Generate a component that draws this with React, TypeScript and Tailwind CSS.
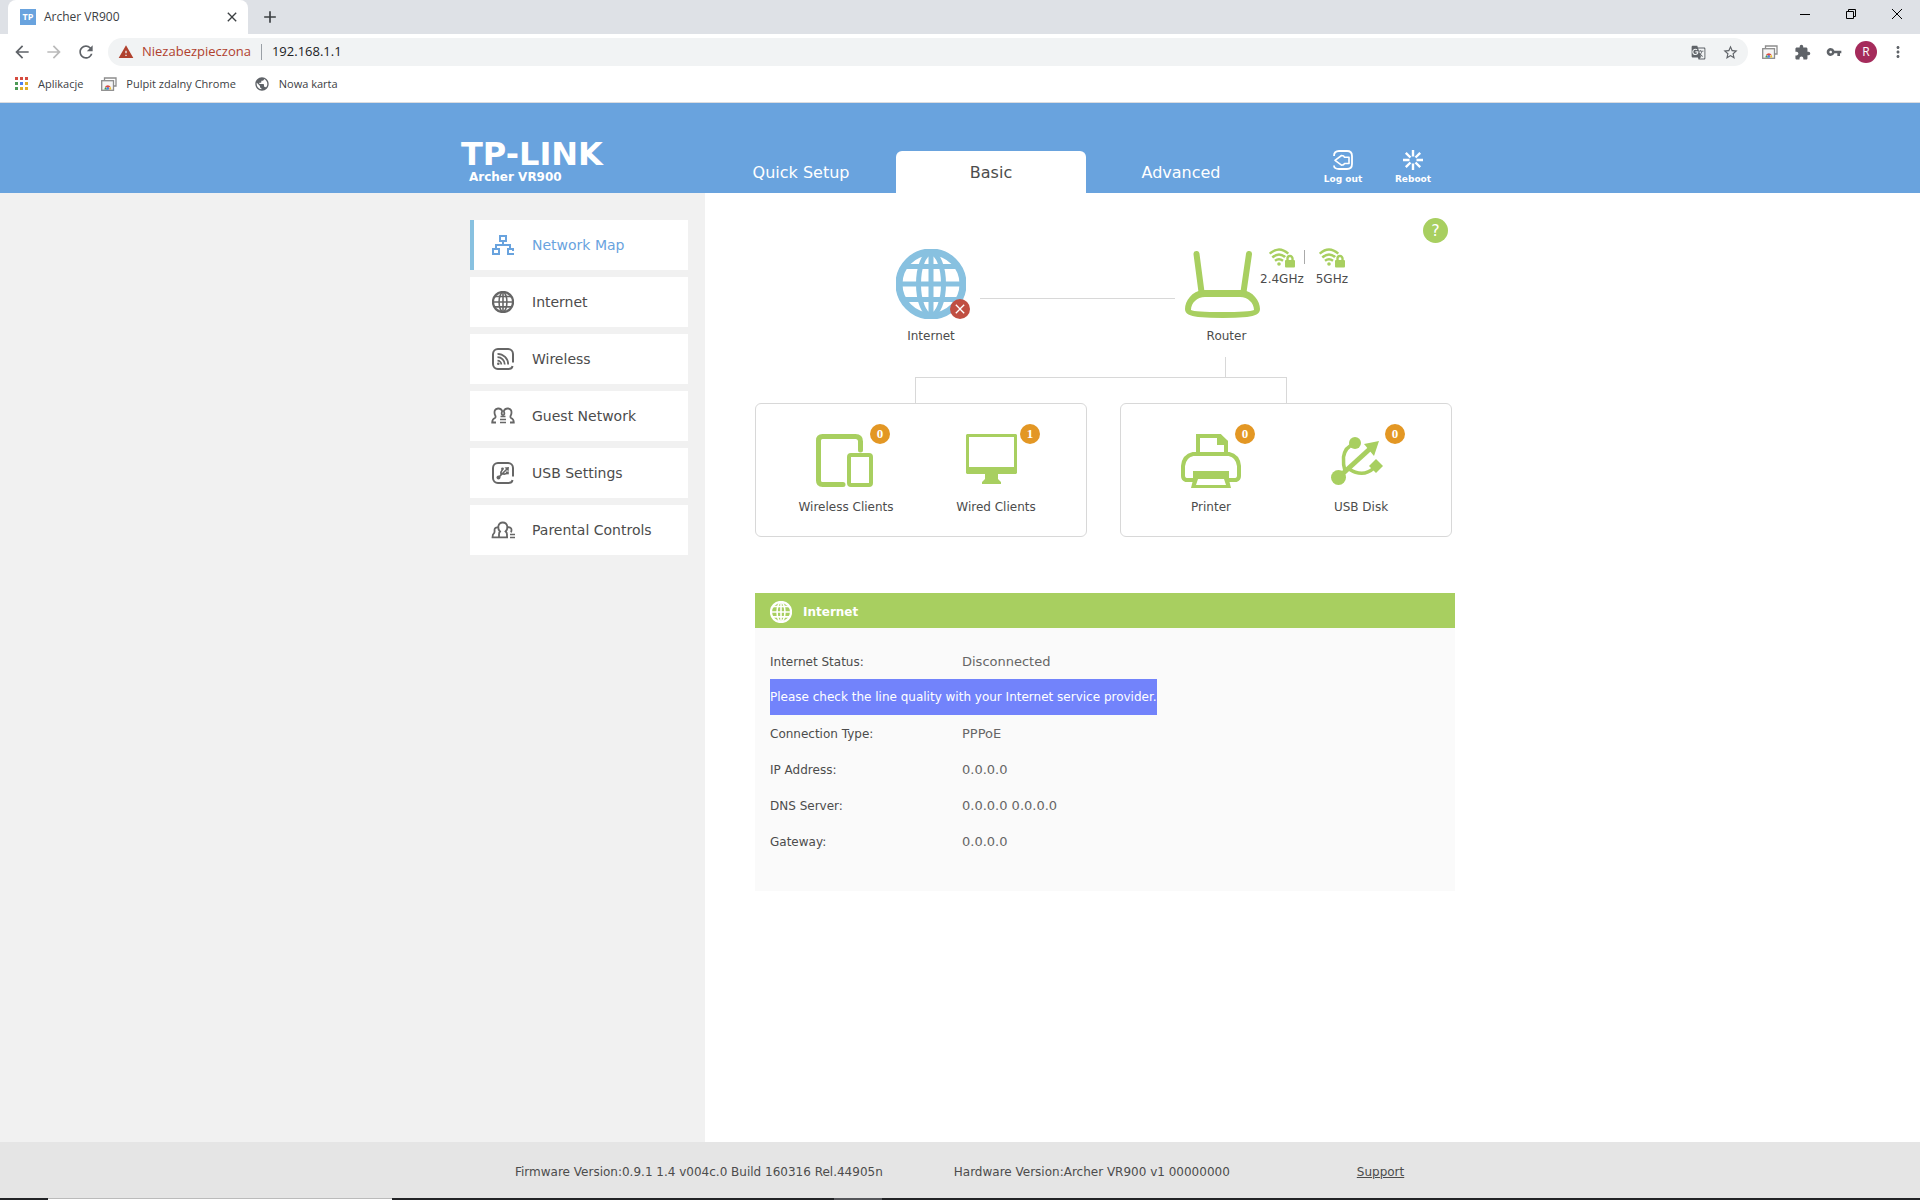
import type { ReactNode } from "react";
import {
  MdAdd,
  MdArrowBack,
  MdArrowForward,
  MdClose,
  MdExtension,
  MdGTranslate,
  MdMoreVert,
  MdPublic,
  MdRefresh,
  MdStarBorder,
  MdVpnKey,
  MdWarning,
} from "react-icons/md";

const uiFont = "font-['Open_Sans','Noto_Sans',sans-serif]";
const pageFont = "font-[Verdana,'DejaVu_Sans',sans-serif]";

const appDots = ["#d64c3f", "#d64c3f", "#d64c3f", "#4d9a56", "#4d7ff0", "#e0ae28", "#4d9a56", "#e0ae28", "#e0ae28"];

function AppsIcon() {
  return (
    <svg width="14" height="14" viewBox="0 0 14 14" aria-hidden="true">
      {appDots.map((color, i) => (
        <rect key={i} x={(i % 3) * 5} y={Math.floor(i / 3) * 5} width="3" height="3" fill={color} />
      ))}
    </svg>
  );
}

function RemoteDesktopIcon() {
  return (
    <svg width="16" height="14" viewBox="0 0 16 14" fill="none" aria-hidden="true">
      <path d="M3.500 3V1h11.500v8h-2" stroke="#8d8d8d" strokeWidth="1.300" />
      <rect x=".7" y="3.700" width="11.800" height="9.600" fill="#f5f5f5" stroke="#8d8d8d" strokeWidth="1.300" />
      <path d="M3.500 12.600a3.300 3.300 0 0 1 .8-2.600L6.500 12.600z" fill="#3f9b52" />
      <path d="M4 9.800a3.300 3.300 0 0 1 5.600 0l-2.800 1.200z" fill="#dd4b3e" />
      <path d="M9.500 9.800a3.300 3.300 0 0 1 .6 2.800H7.500z" fill="#efc02f" />
      <circle cx="6.800" cy="11.500" r="1.300" fill="#4a82ee" />
    </svg>
  );
}

function GlobeIcon({ size, stroke }: { size: number; stroke: number }) {
  return (
    <svg width={size} height={size} viewBox="0 0 70 70" fill="none" stroke="currentColor" strokeWidth={stroke} aria-hidden="true">
      <circle cx="35" cy="35" r="32" strokeWidth={stroke + 2} />
      <ellipse cx="35" cy="35" rx="12.500" ry="31" />
      <path d="M35 3v64M4 35h62M9 17.500h52M9 50.500h52" />
    </svg>
  );
}

function MapIcon() {
  return (
    <svg width="22" height="22" viewBox="0 0 22 22" fill="none" stroke="currentColor" strokeWidth="2" aria-hidden="true">
      <path d="M8 2h6v5H8zM1 15h6v5H1zM11 8v3M4 14v-3h14v3M22 15h-6v5h6M21 14v3" />
    </svg>
  );
}

function WirelessIcon() {
  return (
    <svg width="22" height="22" viewBox="0 0 22 22" fill="none" stroke="currentColor" strokeWidth="2" aria-hidden="true">
      <path d="M21 14.500V6a5 5 0 0 0-5-5H6a5 5 0 0 0-5 5v10a5 5 0 0 0 5 5h10q4 0 4.500-3" />
      <path d="M5.500 12.700a3.800 3.800 0 0 1 3.800 3.800M5.500 9.200a7.300 7.300 0 0 1 7.300 7.300M5.500 5.800a10.700 10.700 0 0 1 10.700 10.700" strokeWidth="1.800" />
      <circle cx="6.300" cy="15.800" r="1.300" fill="currentColor" stroke="none" />
    </svg>
  );
}

function GuestIcon() {
  return (
    <svg width="24" height="18" viewBox="0 0 24 18" fill="none" stroke="currentColor" strokeWidth="1.800" aria-hidden="true">
      <path d="M5 15.500H1.200q0-3.500 2.800-4.500Q5.300 10 3.800 7.500 2.500 2 7 1.500q3-.2 4.200 2.500Q9.800 8 12 8.200 14.200 8 12.800 4 14 1.300 17 1.500q4.500.5 3.200 6-1.500 2.500-.2 3.500 2.800 1 2.800 4.500H19" />
      <path d="M9.500 9.500h5M9 12.500h6M9 15.500h6" strokeWidth="1.400" />
    </svg>
  );
}

function UsbIcon() {
  return (
    <svg width="22" height="22" viewBox="0 0 22 22" fill="none" stroke="currentColor" strokeWidth="2" aria-hidden="true">
      <path d="M21 14.500V6a5 5 0 0 0-5-5H6a5 5 0 0 0-5 5v10a5 5 0 0 0 5 5h10q4 0 4.500-3" />
      <path d="M6.500 15.500 15 7M9 12.500q-.5-3 1.500-5M10.500 11.800q2.500 1 4.500-1" strokeWidth="1.600" />
      <path d="m12.500 5.500 4.500-.5-.5 4.500z" fill="currentColor" stroke="none" />
      <circle cx="6.500" cy="15.500" r="2" fill="currentColor" stroke="none" />
      <circle cx="10.500" cy="6.800" r="1.400" fill="currentColor" stroke="none" />
      <rect x="14" y="9.500" width="2.800" height="2.800" fill="currentColor" stroke="none" />
    </svg>
  );
}

function ParentalIcon() {
  return (
    <svg width="24" height="18" viewBox="0 0 24 18" fill="none" stroke="currentColor" strokeWidth="1.800" aria-hidden="true">
      <path d="M8 16.500v-3q0-2 1-3Q7 8.500 7.300 5.500 8 1.500 11.800 1.500T16.300 5.500q.3 3-1.700 5 1.400 1 1.400 3v3" />
      <path d="M7 6.500q-3.500-.3-3.500 2.500.3 1.500-.3 3-1.700 1-1.700 4.300H17M16.500 6.300q4-.3 4 2.500 0 1.500-.5 2.500" />
      <path d="M19 13.500h5M19 16.500h5" strokeWidth="1.500" />
    </svg>
  );
}

function LogoutIcon() {
  return (
    <svg width="20" height="20" viewBox="0 0 20 20" fill="none" stroke="currentColor" strokeWidth="1.800" strokeLinejoin="round" aria-hidden="true">
      <path d="M1 6q0-5 5-5h8q5 0 5 5v8q0 5-5 5H6q-5 0-5-3.500" />
      <path d="m2 10.300 6.500-4.800q2.500 0 3 1.700h4.500v6.300h-4.500q-.5 1.700-3 1.700z" strokeWidth="1.600" />
    </svg>
  );
}

function RebootIcon() {
  return (
    <svg width="20" height="20" viewBox="0 0 20 20" fill="none" stroke="currentColor" strokeWidth="2.400" aria-hidden="true">
      <path d="M10 0v6.500M10 13.500V20M0 10h6.500M13.500 10H20M2.800 2.800l4.700 4.700M12.500 12.500l4.700 4.700M17.200 2.800l-4.700 4.700M7.500 12.500l-4.700 4.700" />
    </svg>
  );
}

function RouterIcon() {
  return (
    <svg width="76" height="68" viewBox="0 0 76 68" fill="#a8cf60" aria-hidden="true">
      <path d="m11.500 3 5 38M64 3l-5.500 38" stroke="#a8cf60" strokeWidth="6" strokeLinecap="round" />
      <path
        fillRule="evenodd"
        d="M18 39h39c11 1 18 11 18 19 0 5-5 7-13 8q-24 2-49 0C5 65 0 63 0 58c0-8 7-18 18-19ZM20 46C12 46 6 52 6 59q4 2 31 2t32-2c0-7-6-13-14-13Z"
      />
    </svg>
  );
}

function WifiLockIcon() {
  return (
    <svg width="26" height="20" viewBox="0 0 26 20" fill="none" stroke="#a8cf60" strokeWidth="2.400" aria-hidden="true">
      <path d="M.7 5.700q9.300-8.400 18.600 0M3.300 9.500q6.700-6 13.400 0M6 12.800q4-3.200 8 0" />
      <circle cx="10" cy="16" r="1.800" fill="#a8cf60" stroke="none" />
      <path d="M15 20v-9q1.500-4 6-4.500 4 .5 5 4V20z" fill="#fff" stroke="none" />
      <rect x="16" y="12" width="10" height="7.500" rx="1" fill="#a8cf60" stroke="none" />
      <path d="M18.500 13v-2.500a2.500 2.500 0 0 1 5 0V13" />
    </svg>
  );
}

function TabletIcon() {
  return (
    <svg width="60" height="54" viewBox="1 0 60 54" fill="none" stroke="#a8cf60" strokeWidth="5" strokeLinecap="round" aria-hidden="true">
      <path d="M28 50.500H7.500q-4 0-4-4v-40q0-4 4-4h33q5 0 5 5V16" />
      <rect x="34" y="21" width="22" height="30" rx="2" strokeWidth="4" />
    </svg>
  );
}

function MonitorIcon() {
  return (
    <svg width="60" height="54" viewBox="0 0 60 54" fill="#a8cf60" aria-hidden="true">
      <path fillRule="evenodd" d="M1 0h49l1 1v38l-1 1H32v5l3 3v2H16v-2l3-3v-5H1l-1-1V1zM3 3v30h45V3z" />
    </svg>
  );
}

function PrinterIcon() {
  return (
    <svg width="60" height="54" viewBox="0 0 60 54" fill="none" stroke="#a8cf60" strokeWidth="4" aria-hidden="true">
      <path d="M17 18V2h22l6 6v10" />
      <path d="M36 1h4l7 6v4H36z" fill="#a8cf60" stroke="none" />
      <path d="M12 46H5q-3-1-3-4V32q1-10 10-12h36q9 2 10 12v10q0 3-3 4h-7" />
      <path d="M12 37h36v9l2 8H10l2-8z" fill="#a8cf60" stroke="none" />
      <path d="M17 45h26l2 6H15z" fill="#fff" stroke="none" />
    </svg>
  );
}

function UsbDiskIcon() {
  return (
    <svg width="60" height="54" viewBox="0 -3 60 54" fill="none" stroke="#a8cf60" strokeWidth="3.500" aria-hidden="true">
      <path d="M8 40 42 9" strokeWidth="5" />
      <path d="M14 34q-2-6-1.500-14Q14 10 23 7M18 32q14 9 25-1" />
      <path d="m33 7 15-3-5 15z" fill="#a8cf60" stroke="none" />
      <path d="m45 22 7 7-7 7-7-7z" fill="#a8cf60" stroke="none" />
      <circle cx="24" cy="6" r="6" fill="#a8cf60" stroke="none" />
      <circle cx="7.500" cy="40.500" r="7.500" fill="#a8cf60" stroke="none" />
    </svg>
  );
}

function BrowserChrome() {
  return (
    <div className={`${uiFont} text-[12px] text-[#3c4043]`}>
      <div className="flex h-[34px] items-stretch bg-[#dee1e6]">
        <div className="ml-2 flex w-60 items-center rounded-t-lg bg-white pr-2 pl-3">
          <span className="flex h-4 w-4 items-center justify-center bg-[#69a3de] text-[9px] font-bold text-white">TP</span>
          <span className="ml-2 flex-1">Archer VR900</span>
          <button aria-label="Close tab">
            <MdClose size={16} />
          </button>
        </div>
        <button aria-label="New tab" className="ml-3">
          <MdAdd size={20} />
        </button>
        <div className="ml-auto flex pb-1.5 text-black">
          <button aria-label="Minimise" className="flex w-[46px] items-center justify-center">
            <svg width="10" height="10" viewBox="0 0 10 10" stroke="currentColor">
              <path d="M0 5.500h10" />
            </svg>
          </button>
          <button aria-label="Restore" className="flex w-[46px] items-center justify-center">
            <svg width="10" height="10" viewBox="0 0 10 10" fill="none" stroke="currentColor">
              <path d="M.5 2.500h7v7h-7zM2.500 2.500v-2h7v7h-2" />
            </svg>
          </button>
          <button aria-label="Close" className="flex w-[46px] items-center justify-center">
            <svg width="10" height="10" viewBox="0 0 10 10" stroke="currentColor">
              <path d="m0 0 10 10M10 0 0 10" />
            </svg>
          </button>
        </div>
      </div>

      <div className="flex h-9 items-center bg-white pr-1.5 text-[#5f6368]">
        <div className="flex w-[108px] gap-3 pl-3">
          <button aria-label="Back">
            <MdArrowBack size={20} />
          </button>
          <button aria-label="Forward" className="text-[#bababa]">
            <MdArrowForward size={20} />
          </button>
          <button aria-label="Reload">
            <MdRefresh size={20} />
          </button>
        </div>
        <div className="flex h-7 flex-1 items-center rounded-full bg-[#f1f3f4] px-2.5 text-[13px]">
          <button className="flex items-center gap-2 text-[#b0412e]">
            <MdWarning size={16} />
            Niezabezpieczona
          </button>
          <span className="mx-2.5 h-4 w-px bg-[#9aa0a6]" />
          <input aria-label="Address" defaultValue="192.168.1.1" className="flex-1 bg-transparent text-[#202124] outline-none" />
          <button aria-label="Translate" className="w-8">
            <MdGTranslate size={15} className="mx-auto" />
          </button>
          <button aria-label="Bookmark" className="-mr-2 w-8">
            <MdStarBorder size={17} className="mx-auto" />
          </button>
        </div>
        <div className="ml-1.5 flex items-center">
          <button aria-label="Chrome Remote Desktop" className="flex w-8 justify-center">
            <RemoteDesktopIcon />
          </button>
          <button aria-label="Extensions" className="flex w-8 justify-center">
            <MdExtension size={17} />
          </button>
          <button aria-label="Passwords" className="flex w-8 justify-center">
            <MdVpnKey size={16} />
          </button>
          <button className="mx-[5px] flex h-[22px] w-[22px] items-center justify-center rounded-full bg-[#a52b5b] text-white">R</button>
          <button aria-label="Menu" className="flex w-8 justify-center">
            <MdMoreVert size={18} />
          </button>
        </div>
      </div>

      <div className="flex h-[33px] items-center gap-[18px] border-b border-[#dadce0] bg-white pb-1 pl-[15px] text-[11px]">
        <a href="#" className="flex items-center gap-[9px]">
          <AppsIcon />
          Aplikacje
        </a>
        <a href="#" className="flex items-center gap-[9px]">
          <RemoteDesktopIcon />
          Pulpit zdalny Chrome
        </a>
        <a href="#" className="flex items-center gap-[9px]">
          <MdPublic size={16} className="text-[#5f6368]" />
          Nowa karta
        </a>
      </div>
    </div>
  );
}

function Header() {
  return (
    <header className="flex h-[90px] justify-center bg-[#69a3de] text-white">
      <div className="flex w-[990px]">
        <div className="w-[241px] pt-9">
          <p className="-ml-1 text-[32px] leading-[30px] font-bold">TP-LINK</p>
          <p className="ml-1 text-[12px] leading-4 font-bold">Archer VR900</p>
        </div>
        <nav className="flex items-end text-[16px]">
          <a href="#quick" className="flex h-[42px] w-[190px] items-center justify-center pt-0.5">Quick Setup</a>
          <a href="#basic" className="flex h-[42px] w-[190px] items-center justify-center rounded-t-md bg-white pt-0.5 text-[#4c4c4c]">Basic</a>
          <a href="#advanced" className="flex h-[42px] w-[190px] items-center justify-center pt-0.5">Advanced</a>
        </nav>
        <div className="ml-8 flex pt-[47px] text-[9px] leading-[18px] font-bold">
          <button className="flex w-[70px] flex-col items-center">
            <LogoutIcon />
            Log out
          </button>
          <button className="flex w-[70px] flex-col items-center">
            <RebootIcon />
            Reboot
          </button>
        </div>
      </div>
    </header>
  );
}

const menu: { label: string; icon: ReactNode }[] = [
  { label: "Network Map", icon: <MapIcon /> },
  { label: "Internet", icon: <GlobeIcon size={22} stroke={5} /> },
  { label: "Wireless", icon: <WirelessIcon /> },
  { label: "Guest Network", icon: <GuestIcon /> },
  { label: "USB Settings", icon: <UsbIcon /> },
  { label: "Parental Controls", icon: <ParentalIcon /> },
];

function Sidebar() {
  return (
    <nav className="flex w-[240px] flex-col gap-[7px] bg-[#f1f1f1] pt-[27px] pr-[17px] pl-[5px]">
      {menu.map((item, i) => (
        <a
          key={item.label}
          href="#"
          className={`flex h-[50px] items-center border-l-4 bg-white text-[14px] ${
            i === 0 ? "border-[#88c1e0] text-[#69a3de]" : "border-white text-[#4c4c4c]"
          }`}
        >
          <span className={`ml-4 flex w-[26px] justify-center ${i === 0 ? "" : "text-[#666]"}`}>{item.icon}</span>
          <span className="ml-4">{item.label}</span>
        </a>
      ))}
    </nav>
  );
}

function Device({ label, count, children }: { label: string; count: number; children: ReactNode }) {
  return (
    <button className="flex w-[150px] flex-col items-center gap-2">
      <span className="relative flex h-[54px] items-start">
        {children}
        <span className="absolute -top-2.5 left-full -ml-1.5 flex h-5 w-5 items-center justify-center rounded-full bg-[#e39724] font-['Liberation_Serif',serif] text-[13px] font-bold text-white">
          {count}
        </span>
      </span>
      <span className="leading-[22px]">{label}</span>
    </button>
  );
}

function Band({ label }: { label: string }) {
  return (
    <div className="flex flex-col items-center">
      <WifiLockIcon />
      <span className="leading-[22px]">{label}</span>
    </div>
  );
}

function NetworkMap() {
  return (
    <section className="text-[12px] text-[#4c4c4c]">
      <div className="flex items-start">
        <button className="mt-[31px] ml-[141px] flex w-[70px] flex-col items-center gap-1.5">
          <span className="relative text-[#88c1e0]">
            <GlobeIcon size={70} stroke={5} />
            <span className="absolute -right-1 bottom-0 flex h-5 w-5 items-center justify-center rounded-full bg-[#c04f42] text-white">
              <MdClose size={16} />
            </span>
          </span>
          <span className="leading-[22px]">Internet</span>
        </button>
        <span className="mt-20 ml-3.5 h-px w-[195px] bg-[#d8d8d8]" />
        <button className="mt-[33px] ml-2.5 flex w-[75px] flex-col gap-1.5">
          <RouterIcon />
          <span className="w-full pl-2 leading-[22px]">Router</span>
        </button>
        <div className="mt-[30px] flex">
          <Band label="2.4GHz" />
          <span className="mt-0.5 mr-[11px] h-3.5 w-px bg-[#aaa]" />
          <Band label="5GHz" />
        </div>
        <button aria-label="Help" className="mr-[7px] ml-auto h-[25px] w-[25px] rounded-full bg-[#a8cf60] text-[16px] leading-none text-white">
          ?
        </button>
      </div>

      <div className="mt-2.5 ml-[470px] h-5 w-px bg-[#d8d8d8]" />
      <div className="ml-[160px] h-[26px] w-[372px] border-x border-t border-[#d8d8d8]" />
      <div className="flex gap-[33px]">
        <div className="flex h-[134px] w-[332px] justify-center rounded-md border border-[#d8d8d8] pt-[30px]">
          <Device label="Wireless Clients" count={0}>
            <TabletIcon />
          </Device>
          <Device label="Wired Clients" count={1}>
            <MonitorIcon />
          </Device>
        </div>
        <div className="flex h-[134px] w-[332px] justify-center rounded-md border border-[#d8d8d8] pt-[30px]">
          <Device label="Printer" count={0}>
            <PrinterIcon />
          </Device>
          <Device label="USB Disk" count={0}>
            <UsbDiskIcon />
          </Device>
        </div>
      </div>
    </section>
  );
}

function Row({ label, value }: { label: string; value: string }) {
  return (
    <div className="flex h-9 items-center pt-0.5">
      <dt className="w-48 text-[12px] text-[#4c4c4c]">{label}</dt>
      <dd className="text-[13px] text-[#666]">{value}</dd>
    </div>
  );
}

function InternetPanel() {
  return (
    <section className="mt-14">
      <h2 className="flex h-[35px] items-center gap-[11px] bg-[#a8cf60] pt-0.5 pl-[15px] text-[12px] font-bold text-white">
        <GlobeIcon size={22} stroke={5} />
        Internet
      </h2>
      <dl className="bg-[#fafafa] pt-[15px] pb-8 pl-[15px]">
        <Row label="Internet Status:" value="Disconnected" />
        <div className="flex h-9">
          <p className="flex items-center bg-[#7283fb] text-[12px] whitespace-nowrap text-white">
            Please check the line quality with your Internet service provider.
          </p>
        </div>
        <Row label="Connection Type:" value="PPPoE" />
        <Row label="IP Address:" value="0.0.0.0" />
        <Row label="DNS Server:" value="0.0.0.0 0.0.0.0" />
        <Row label="Gateway:" value="0.0.0.0" />
      </dl>
    </section>
  );
}

export default function App() {
  return (
    <div className="flex min-h-screen flex-col bg-white">
      <BrowserChrome />
      <div className={`${pageFont} flex flex-1 flex-col`}>
        <Header />
        <div className="flex flex-1">
          <div className="flex-1 bg-[#f1f1f1]" />
          <Sidebar />
          <main className="w-[750px] pt-[25px] pl-[50px]">
            <NetworkMap />
            <InternetPanel />
          </main>
          <div className="flex-1" />
        </div>
        <footer className="flex h-14 justify-center bg-[#e5e5e5] text-[12px] text-[#4c4c4c]">
          <div className="flex w-[990px] items-center pt-1 pl-[50px]">
            <span>Firmware Version:0.9.1 1.4 v004c.0 Build 160316 Rel.44905n</span>
            <span className="ml-[71px]">Hardware Version:Archer VR900 v1 00000000</span>
            <a href="#support" className="ml-[127px] underline">Support</a>
          </div>
        </footer>
      </div>
      <div className="flex h-0.5 bg-[#222326]">
        <span className="ml-12 w-[344px] border-t border-[#bbb] bg-white" />
        <span className="ml-[442px] w-12 bg-[#55565a]" />
      </div>
    </div>
  );
}
